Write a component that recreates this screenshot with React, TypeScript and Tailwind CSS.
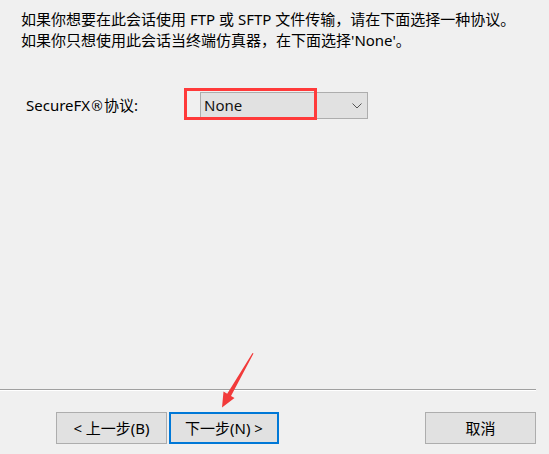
import React from 'react';

const font = { fontFamily: '"Microsoft YaHei", "Noto Sans", "Noto Sans CJK SC", sans-serif' };

const Chevron: React.FC = () => (
  <svg width="10" height="6" viewBox="0 0 10 6" fill="none">
    <path d="M0.5 0.5 L5 5 L9.5 0.5" stroke="#555" strokeWidth="1" />
  </svg>
);

const Arrow: React.FC = () => (
  <svg className="absolute left-0 top-0 pointer-events-none" width="549" height="454">
    <polygon
      points="253.5,353.5 231,396 234.5,398 222,407.5 223.5,391.5 227.2,393.8 252.5,353"
      fill="#f23a3a"
    />
  </svg>
);

export default function App() {
  return (
    <div
      className="relative w-[549px] h-[454px] bg-[#f0f0f0] text-black flex flex-col overflow-hidden"
      style={font}
    >
      <div className="pl-[21px] pt-[9px] text-[15px] leading-[21px]">
        <p>如果你想要在此会话使用 FTP 或 SFTP 文件传输，请在下面选择一种协议。</p>
        <p>如果你只想使用此会话当终端仿真器，在下面选择'None'。</p>
      </div>

      <div className="mt-[41px] pl-[26px] flex items-center text-[15px] leading-[21px]">
        <span className="w-[174px]">
          SecureFX<span className="font-['DejaVu_Sans'] text-[14px]">®</span>协议:
        </span>
        <div className="w-[168px] h-[27px] bg-[#e1e1e1] border border-[#adadad] flex items-center justify-between pl-[3px] pr-[5px]">
          <span className="text-[#111]">None</span>
          <Chevron />
        </div>
      </div>

      {/* annotation box */}
      <div className="absolute left-[184px] top-[88px] w-[133px] h-[32px] border-[3px] border-[#ff3a3a]" />

      <div className="mt-auto">
        <div className="w-[536px] h-px bg-[#a0a0a0]" />
        <div className="w-[536px] h-px bg-white" />
      </div>

      <div className="mt-[21px] mb-[10px] pl-[56px] pr-[13px] flex text-[15px]">
        <button className="w-[111px] h-[32px] bg-[#e1e1e1] border border-[#adadad] flex items-center justify-center">
          &lt; 上一步(B)
        </button>
        <button className="ml-[2px] w-[110px] h-[32px] bg-[#e1e1e1] border-2 border-[#0078d7] flex items-center justify-center">
          下一步(N) &gt;
        </button>
        <button className="ml-auto w-[111px] h-[32px] bg-[#e1e1e1] border border-[#adadad] flex items-center justify-center">
          取消
        </button>
      </div>

      <Arrow />
    </div>
  );
}
